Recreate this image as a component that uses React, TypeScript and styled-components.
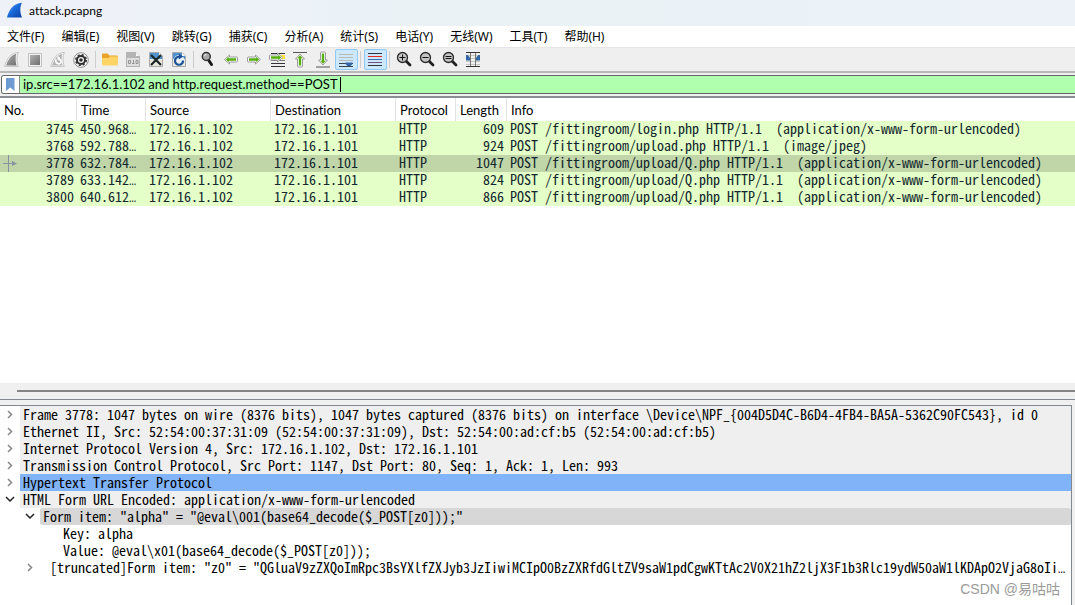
import React from "react";
import styled, { createGlobalStyle, css } from "styled-components";

const MONO = `"Noto Sans Mono CJK SC", "Liberation Mono", monospace`;
const UI = `Lato, "Noto Sans", "Noto Sans CJK SC", sans-serif`;

const GlobalStyle = createGlobalStyle`
  * { box-sizing: border-box; }
  body {
    margin: 0;
    background: #fff;
    color: #000;
    font-family: ${UI};
    font-size: 12px;
    font-variant-ligatures: none;
  }
  button, input { font: inherit; color: inherit; font-variant-ligatures: none; }
`;

const Window = styled.div`
  display: flex;
  flex-direction: column;
  min-height: 100vh;
  overflow: hidden;
`;

const TitleBar = styled.header`
  display: flex;
  align-items: center;
  gap: 6px;
  height: 26px;
  padding: 0 6px 5px;
  background: linear-gradient(90deg, #eff1f9, #eaf2f6 40%, #ecf2f7);
`;

const Title = styled.h1`
  margin: 0;
  font-size: 12px;
  font-weight: 400;
  line-height: 17px;
`;

const MenuBar = styled.nav`
  display: flex;
  gap: 17px;
  height: 21px;
  padding: 0 7px;
  background: #fff;
`;

const MenuItem = styled.button`
  padding: 0;
  border: 0;
  background: none;
  font-family: "Noto Sans", "Noto Sans CJK SC", sans-serif;
  font-size: 12px;
  line-height: 20px;
  white-space: nowrap;
`;

const ToolBar = styled.div`
  display: flex;
  align-items: center;
  height: 26px;
  padding: 0 1px;
  border-top: 1px solid #e6e6e6;
  border-bottom: 2px solid #b8b8b8;
  background: #efefef;
`;

const ToolButton = styled.button<{ $on?: boolean }>`
  display: flex;
  align-items: center;
  justify-content: center;
  flex: none;
  width: 23px;
  height: 21px;
  padding: 0;
  border: 1px solid ${(p) => (p.$on ? "#90c8f6" : "transparent")};
  border-radius: 2px;
  background: ${(p) => (p.$on ? "#cce8ff" : "none")};

  svg {
    display: block;
    flex: none;
  }
`;

const Separator = styled.span`
  flex: none;
  width: 1px;
  height: 17px;
  margin: 0 3px 0 2px;
  background: #cdcdcd;
`;

const FilterRow = styled.form`
  display: flex;
  height: 23px;
  padding: 2px 0 2px 1px;
  background: #f0f0f0;
`;

const FilterBox = styled.div`
  display: flex;
  flex: 1;
  border: 1px solid #666;
  border-right: 0;
  border-radius: 3px 0 0 3px;
  background: #afffaf;
  overflow: hidden;
`;

const Bookmark = styled.button`
  display: flex;
  align-items: center;
  justify-content: center;
  width: 18px;
  padding: 0;
  border: 0;
  border-right: 1px solid #8a8a8a;
  background: #fff;
`;

const FilterField = styled.div`
  position: relative;
  display: flex;
  flex: 1;
  align-items: center;
`;

const FilterInput = styled.input`
  flex: none;
  width: 100%;
  padding: 0 3px;
  border: 0;
  outline: 0;
  background: transparent;
  font-size: 13px;
  line-height: 17px;
`;

const Caret = styled.span`
  position: absolute;
  left: 320px;
  top: 1px;
  width: 1px;
  height: 15px;
  background: #000;
`;

const PacketPane = styled.section`
  flex: 1;
  min-height: 287px;
  border-top: 2px solid #8a8d91;
  background: #fff;
`;

const PacketTable = styled.table`
  width: 100%;
  table-layout: fixed;
  border-collapse: separate;
  border-spacing: 0;
`;

const HeadCell = styled.th`
  height: 23px;
  padding: 0 0 0 4px;
  border-right: 1px solid #e2e2e2;
  font-size: 13px;
  font-weight: 400;
  line-height: 22px;
  text-align: left;
  white-space: nowrap;

  &:last-child {
    border-right: 0;
  }
`;

const PacketRow = styled.tr<{ $selected?: boolean }>`
  background: ${(p) => (p.$selected ? "#c0d6a8" : "#e4ffc7")};
`;

const Cell = styled.td<{ $right?: boolean }>`
  height: 17px;
  padding: 0 3px;
  color: #12272e;
  font-family: ${MONO};
  font-size: 14px;
  line-height: 15px;
  text-align: ${(p) => (p.$right ? "right" : "left")};
  vertical-align: top;
  white-space: pre;
`;

const NumberCell = styled.div`
  display: flex;
  align-items: flex-start;
  justify-content: space-between;
  height: 17px;

  span {
    flex: 1;
  }
`;

const Dots = styled.span`
  font-family: "Liberation Mono", monospace;
  font-size: 12px;
  line-height: 1;
`;

const ScrollStrip = styled.div`
  height: 17px;
  padding: 7px 0 0 17px;
  border-bottom: 1px solid #828790;
  background: #f0f0f0;
`;

const ScrollThumb = styled.div`
  height: 2px;
  background: #858585;
`;

const DetailFrame = styled.section`
  padding: 5px 3px 0 0;
  background: #f0f0f0;
`;

const Tree = styled.ul`
  min-height: 200px;
  margin: 0;
  padding: 0;
  border-top: 1px solid #828790;
  border-right: 1px solid #828790;
  background: #fff;
  list-style: none;
  font-family: ${MONO};
  font-size: 14px;
  line-height: 17px;
`;

const tones = {
  none: css`background: none;`,
  proto: css`background: #efefef;`,
  active: css`background: #80b3f7;`,
  selected: css`
    background: #d7d7d7;
    border-radius: 2px;
  `,
};

const TreeRow = styled.li<{ $level: number }>`
  display: flex;
  height: 17px;
  padding-left: ${(p) => p.$level * 20}px;
`;

const Toggle = styled.button`
  display: flex;
  align-items: center;
  justify-content: center;
  flex: none;
  width: 20px;
  padding: 0;
  border: 0;
  background: none;
`;

const Blank = styled.span`
  flex: none;
  width: 20px;
`;

const Label = styled.span<{ $tone: keyof typeof tones; $inset?: boolean }>`
  flex: 1;
  min-width: 0;
  padding-left: ${(p) => (p.$inset ? 10 : 3)}px;
  white-space: pre;
  ${(p) => tones[p.$tone]}
`;

const Watermark = styled.div`
  position: absolute;
  right: 15px;
  bottom: 5px;
  color: #9a9a9a;
  font-family: "Liberation Sans", "Noto Sans CJK SC", sans-serif;
  font-size: 14px;
  line-height: 22px;
`;

const Page = styled.main`
  position: relative;
`;

const Svg = ({ children }: { children: React.ReactNode }) => (
  <svg width="17" height="17" viewBox="0 0 17 17" fill="none" aria-hidden="true">
    {children}
  </svg>
);

const finOutline = "M.5 15.5C3 7 7 2 14.500 1.300C12.500 4.500 12.500 10.500 14.300 15.500Z";
const finBody = "M2 14.500C4.500 7.500 8 3.800 12.300 2.800C11.300 6.500 11.300 10.500 12.600 14.500Z";

const FinShape = () => (
  <>
    <defs>
      <linearGradient id="fin" x1="0" y1="0" x2="1" y2="1">
        <stop offset="0" stopColor="#b2b2b2" />
        <stop offset="1" stopColor="#6e6e6e" />
      </linearGradient>
    </defs>
    <path d={finOutline} fill="#f6f6f6" stroke="#c6c6c6" />
  </>
);

const PageShape = () => (
  <>
    <path d="M1.500 1.500H11L14.500 5V15.500H1.500Z" fill="#fff" stroke="#a9a9a9" />
    <path d="M2 2H11V5H14V8H2Z" fill="#4f94cf" />
    <path d="M2 8H14V15H2Z" fill="#e7e9dc" />
    <path d="M11 2L14 5H11Z" fill="#fff" />
  </>
);

const Arrow = ({ rotate = 0 }: { rotate?: number }) => (
  <g transform={`rotate(${rotate} 8 8.500)`}>
    <path
      d="M1.500 8.500L6.500 4V6H13.500Q14.500 6 14.500 7V10Q14.500 11 13.500 11H6.500V13Z"
      fill="#fff"
      stroke="#9b9b9b"
      strokeLinejoin="round"
    />
    <path d="M2.800 8.500L5.800 5.800V7.300H13V9.700H5.800V11.200Z" fill="#55b010" />
  </g>
);

const Lens = ({ sign }: { sign: "plus" | "minus" | "equal" }) => (
  <>
    <path d="M10 10L14 14" stroke="#202020" strokeWidth="2.800" strokeLinecap="round" />
    <circle cx="6.500" cy="6.500" r="5" fill="#c4c4c4" stroke="#2a2a2a" strokeWidth="1.300" />
    {sign === "plus" && <path d="M3.500 6.500H9.500M6.500 3.500V9.500" stroke="#111" />}
    {sign === "minus" && <path d="M3.500 6.500H9.500" stroke="#111" />}
    {sign === "equal" && <path d="M3.500 5.500H9.500M3.500 7.500H9.500" stroke="#111" />}
  </>
);

type Tool = { label: string; icon: React.ReactNode; on?: boolean };

const toolGroups: Tool[][] = [
  [
    {
      label: "Start capture",
      icon: (
        <>
          <FinShape />
          <path d={finBody} fill="url(#fin)" />
        </>
      ),
    },
    {
      label: "Stop capture",
      icon: (
        <>
          <path d="M1.500 2.500H14.500V15.500H1.500Z" fill="#f3f3f3" stroke="#c2c2c2" />
          <path d="M3 4H13V14H3Z" fill="url(#fin)" />
        </>
      ),
    },
    {
      label: "Restart capture",
      icon: (
        <>
          <FinShape />
          <path d={finBody} fill="#b4b4b4" />
          <path d="M6 8.500C4.700 12.700 9.800 14.300 11 11.200C11.600 9.600 10.400 8.300 9 8.500V6.300" stroke="#fff" strokeWidth="1.600" />
          <path d="M10.300 7.500L7.500 4.500V9Z" fill="#fff" />
        </>
      ),
    },
    {
      label: "Capture options",
      icon: (
        <>
          <circle cx="8" cy="9" r="7.300" fill="#fafafa" stroke="#777" strokeWidth=".8" />
          <circle cx="8" cy="9" r="4" stroke="#303030" strokeWidth="2" />
          <circle cx="8" cy="9" r="5.300" stroke="#303030" strokeWidth="1.400" strokeDasharray="2.200 1.960" />
          <circle cx="8" cy="9" r="1.800" fill="#303030" />
        </>
      ),
    },
  ],
  [
    {
      label: "Open",
      icon: (
        <>
          <path d="M0 3.500Q0 2.500 1 2.500H5.500L7.500 4.500H14.500Q16 4.500 16 6V9H0Z" fill="#e9a52b" />
          <path d="M0 7H6.500L8 5.500H15Q16 5.500 16 6.500V13.500Q16 14.500 15 14.500H1Q0 14.500 0 13.500Z" fill="#ffd467" />
        </>
      ),
    },
    {
      label: "Save",
      icon: (
        <>
          <path d="M1 1H11L15 5V16H1Z" fill="#b4b4b4" />
          <path d="M2 7H14V15H2Z" fill="#dedede" />
          <path d="M11 1L15 5H11Z" fill="#f4f4f4" />
          <path d="M3.500 9.500H5.500V12.500H3.500ZM8.500 9V13M7 12.500H9.500M11 9.500H13V12.500H11Z" stroke="#8f8f8f" strokeWidth=".9" />
        </>
      ),
    },
    {
      label: "Close",
      icon: (
        <>
          <PageShape />
          <path d="M3 4L13 14M13 4L3 14" stroke="#1c2527" strokeWidth="2.200" />
        </>
      ),
    },
    {
      label: "Reload",
      icon: (
        <>
          <PageShape />
          <circle cx="8" cy="9.300" r="5.300" fill="#edf2f6" />
          <path d="M12 9.500A4 4 0 1 1 8.500 5.800" stroke="#1b529a" strokeWidth="2.200" />
          <path d="M7.800 2.500L12.300 5.500L7.800 8.500Z" fill="#1b529a" />
        </>
      ),
    },
  ],
  [
    {
      label: "Find",
      icon: (
        <>
          <path d="M8.500 9L11.500 13.500" stroke="#171717" strokeWidth="3" strokeLinecap="round" />
          <circle cx="6.300" cy="5.500" r="4" fill="#a8a8a8" stroke="#333" strokeWidth="1.500" />
          <path d="M4.300 5.300A2.200 2.200 0 0 1 6.500 3.300" stroke="#efefef" />
        </>
      ),
    },
    { label: "Previous packet", icon: <Arrow /> },
    { label: "Next packet", icon: <Arrow rotate={180} /> },
    {
      label: "Go to packet",
      icon: (
        <>
          <path d="M2 2.500H16M2 12.500H16M2 15.500H16" stroke="#333" />
          <path d="M10 4H16V8H10Z" fill="#ffe23c" />
          <path d="M2 9.500H16" stroke="#777" />
          <g transform="translate(-1 -2)"><Arrow rotate={180} /></g>
        </>
      ),
    },
    {
      label: "First packet",
      icon: (
        <>
          <path d="M1 1.500H15" stroke="#555" />
          <g transform="translate(0 1)"><Arrow rotate={90} /></g>
        </>
      ),
    },
    {
      label: "Last packet",
      icon: (
        <>
          <path d="M1 16H15" stroke="#555" />
          <g transform="translate(0 -1)"><Arrow rotate={270} /></g>
        </>
      ),
    },
    {
      label: "Auto scroll",
      on: true,
      icon: (
        <>
          <path d="M1 3.500H15M1 6.500H15M1 9.500H15" stroke="#b4bab4" />
          <path d="M1 12.500H15M1 15.500H15" stroke="#39424a" />
          <path d="M7.500 11.500H14.500V13L12.500 15H9.500L7.500 13Z" fill="#3465a4" />
        </>
      ),
    },
  ],
  [
    {
      label: "Colorize",
      on: true,
      icon: (
        <>
          <path d="M1 2.500H15M1 14.500H15" stroke="#303437" />
          <path d="M1 5.500H15" stroke="#e02c20" />
          <path d="M1 8.500H15" stroke="#3f6db5" />
          <path d="M1 11.500H15" stroke="#75507b" />
        </>
      ),
    },
  ],
  [
    { label: "Zoom in", icon: <Lens sign="plus" /> },
    { label: "Zoom out", icon: <Lens sign="minus" /> },
    { label: "Normal size", icon: <Lens sign="equal" /> },
    {
      label: "Resize columns",
      icon: (
        <>
          <path d="M1 1.500H15M1 15.500H15" stroke="#333" />
          <path d="M1 4.500H15M1 7.500H15M1 10.500H15M1 13.500H15" stroke="#c4c8c1" />
          <path d="M5.500 2V15M10.500 2V15" stroke="#777" />
          <path d="M1 4H2.500L5 6.500V9.500H1Z" fill="#3465a4" />
          <path d="M15 4H13.500L11 6.500V9.500H15Z" fill="#3465a4" />
        </>
      ),
    },
  ],
];

const menus = [
  "文件(F)", "编辑(E)", "视图(V)", "跳转(G)", "捕获(C)", "分析(A)",
  "统计(S)", "电话(Y)", "无线(W)", "工具(T)", "帮助(H)",
];

const columns = [
  { name: "No.", width: 77 },
  { name: "Time", width: 69 },
  { name: "Source", width: 125 },
  { name: "Destination", width: 125 },
  { name: "Protocol", width: 60 },
  { name: "Length", width: 51 },
  { name: "Info" },
];

const FORM = "(application/x-www-form-urlencoded)";

const packets = [
  { no: 3745, time: "450.968", length: 609, info: `POST /fittingroom/login.php HTTP/1.1  ${FORM}` },
  { no: 3768, time: "592.788", length: 924, info: "POST /fittingroom/upload.php HTTP/1.1  (image/jpeg)" },
  { no: 3778, time: "632.784", length: 1047, info: `POST /fittingroom/upload/Q.php HTTP/1.1  ${FORM}`, selected: true },
  { no: 3789, time: "633.142", length: 824, info: `POST /fittingroom/upload/Q.php HTTP/1.1  ${FORM}` },
  { no: 3800, time: "640.612", length: 866, info: `POST /fittingroom/upload/Q.php HTTP/1.1  ${FORM}` },
];

type Node = {
  text: string;
  level: number;
  state?: "open" | "closed";
  tone: keyof typeof tones;
  truncated?: boolean;
};

const details: Node[] = [
  { level: 0, state: "closed", tone: "proto", text: "Frame 3778: 1047 bytes on wire (8376 bits), 1047 bytes captured (8376 bits) on interface \\Device\\NPF_{004D5D4C-B6D4-4FB4-BA5A-5362C90FC543}, id 0" },
  { level: 0, state: "closed", tone: "proto", text: "Ethernet II, Src: 52:54:00:37:31:09 (52:54:00:37:31:09), Dst: 52:54:00:ad:cf:b5 (52:54:00:ad:cf:b5)" },
  { level: 0, state: "closed", tone: "proto", text: "Internet Protocol Version 4, Src: 172.16.1.102, Dst: 172.16.1.101" },
  { level: 0, state: "closed", tone: "proto", text: "Transmission Control Protocol, Src Port: 1147, Dst Port: 80, Seq: 1, Ack: 1, Len: 993" },
  { level: 0, state: "closed", tone: "active", text: "Hypertext Transfer Protocol" },
  { level: 0, state: "open", tone: "proto", text: "HTML Form URL Encoded: application/x-www-form-urlencoded" },
  { level: 1, state: "open", tone: "selected", text: 'Form item: "alpha" = "@eval\\001(base64_decode($_POST[z0]));"' },
  { level: 2, tone: "none", text: "Key: alpha" },
  { level: 2, tone: "none", text: "Value: @eval\\x01(base64_decode($_POST[z0]));" },
  { level: 1, state: "closed", tone: "none", truncated: true, text: '[truncated]Form item: "z0" = "QGluaV9zZXQoImRpc3BsYXlfZXJyb3JzIiwiMCIpO0BzZXRfdGltZV9saW1pdCgwKTtAc2V0X21hZ2ljX3F1b3Rlc19ydW50aW1lKDApO2VjaG8oIi' },
];

const Chevron = ({ open }: { open: boolean }) => (
  <svg width="10" height="11" viewBox="0 0 10 11" fill="none" aria-hidden="true">
    <path
      d={open ? "M1 3L5 7L9 3" : "M3 2L6.500 5.500L3 9"}
      stroke={open ? "#222" : "#888"}
      strokeWidth="1.500"
    />
  </svg>
);

export default function App() {
  return (
    <Page>
      <GlobalStyle />
      <Window>
        <TitleBar>
          <svg width="17" height="17" viewBox="0 0 17 17" aria-hidden="true">
            <defs>
              <linearGradient id="shark" x1="0" y1="0" x2="1" y2="1">
                <stop offset="0" stopColor="#55a5f3" />
                <stop offset=".5" stopColor="#1967d6" />
                <stop offset="1" stopColor="#0b3fa4" />
              </linearGradient>
            </defs>
            <path d="M1 15.500C3 7.500 7.500 1.500 16 .8C13.800 4.500 13.800 10.500 16 15.500Z" fill="url(#shark)" />
          </svg>
          <Title>attack.pcapng</Title>
        </TitleBar>

        <MenuBar>
          {menus.map((m) => (
            <MenuItem key={m} type="button">{m}</MenuItem>
          ))}
        </MenuBar>

        <ToolBar role="toolbar">
          {toolGroups.map((group, i) => (
            <React.Fragment key={i}>
              {i > 0 && <Separator />}
              {group.map((tool) => (
                <ToolButton key={tool.label} type="button" aria-label={tool.label} $on={tool.on}>
                  <Svg>{tool.icon}</Svg>
                </ToolButton>
              ))}
            </React.Fragment>
          ))}
        </ToolBar>

        <FilterRow>
          <FilterBox>
            <Bookmark type="button" aria-label="Filter bookmarks">
              <svg width="9" height="13" viewBox="0 0 9 13" aria-hidden="true">
                <path d="M0 0H8.500V13L4.250 9.500L0 13Z" fill="#6d9bd1" />
              </svg>
            </Bookmark>
            <FilterField>
              <FilterInput
                aria-label="Display filter"
                defaultValue="ip.src==172.16.1.102 and http.request.method==POST"
              />
              <Caret />
            </FilterField>
          </FilterBox>
        </FilterRow>

        <PacketPane>
          <PacketTable>
            <colgroup>
              {columns.map((c) => (
                <col key={c.name} width={c.width} />
              ))}
            </colgroup>
            <thead>
              <tr>
                {columns.map((c) => (
                  <HeadCell key={c.name} scope="col">{c.name}</HeadCell>
                ))}
              </tr>
            </thead>
            <tbody>
              {packets.map((p) => (
                <PacketRow key={p.no} $selected={p.selected}>
                  <Cell $right>
                    <NumberCell>
                      {p.selected && (
                        <svg width="14" height="17" viewBox="0 0 14 17" aria-hidden="true">
                          <path d="M5.500 0V17M-1 8.500H10" stroke="#8493a0" />
                          <path d="M9 6L14 8.500L9 11Z" fill="#8493a0" />
                        </svg>
                      )}
                      <span>{p.no}</span>
                    </NumberCell>
                  </Cell>
                  <Cell>{p.time}<Dots>…</Dots></Cell>
                  <Cell>172.16.1.102</Cell>
                  <Cell>172.16.1.101</Cell>
                  <Cell>HTTP</Cell>
                  <Cell $right>{p.length}</Cell>
                  <Cell>{p.info}</Cell>
                </PacketRow>
              ))}
            </tbody>
          </PacketTable>
        </PacketPane>

        <ScrollStrip>
          <ScrollThumb />
        </ScrollStrip>

        <DetailFrame>
          <Tree>
            {details.map((d) => (
              <TreeRow key={d.text} $level={d.level}>
                {d.state ? (
                  <Toggle type="button" aria-label={d.state === "open" ? "Collapse" : "Expand"}>
                    <Chevron open={d.state === "open"} />
                  </Toggle>
                ) : (
                  <Blank />
                )}
                <Label $tone={d.tone} $inset={d.truncated}>
                  {d.text}
                  {d.truncated && <Dots>…</Dots>}
                </Label>
              </TreeRow>
            ))}
          </Tree>
        </DetailFrame>
      </Window>
      <Watermark>CSDN @易咕咕</Watermark>
    </Page>
  );
}
